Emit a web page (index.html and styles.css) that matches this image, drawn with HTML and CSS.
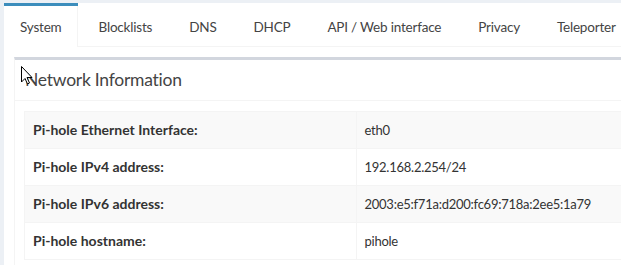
FILE: index.html
```html
<!DOCTYPE html>
<html>
<head>
<meta charset="utf-8">
<link rel="stylesheet" href="styles.css">
</head>
<body>
<div class="page">
  <div class="tabs-custom">
    <ul class="nav-tabs">
      <li class="active"><a>System</a></li>
      <li><a>Blocklists</a></li>
      <li><a>DNS</a></li>
      <li><a>DHCP</a></li>
      <li><a>API / Web interface</a></li>
      <li><a>Privacy</a></li>
      <li><a>Teleporter</a></li>
    </ul>
    <div class="tab-content">
      <div class="box">
        <div class="box-header"><h3>Network Information</h3></div>
        <div class="box-body">
          <table class="info">
            <tr class="odd"><th>Pi-hole Ethernet Interface:</th><td>eth0</td></tr>
            <tr><th>Pi-hole IPv4 address:</th><td>192.168.2.254/24</td></tr>
            <tr class="odd"><th>Pi-hole IPv6 address:</th><td>2003:e5:f71a:d200:fc69:718a:2ee5:1a79</td></tr>
            <tr><th>Pi-hole hostname:</th><td>pihole</td></tr>
          </table>
        </div>
      </div>
    </div>
  </div>
</div>
<svg class="cursor" width="12" height="19" viewBox="0 0 12 19"><path d="M0.5 0.5 L0.5 16 L4 12.5 L6.5 18 L8.5 17 L6 11.5 L11 11.5 Z" fill="#fff" stroke="#000" stroke-width="1" stroke-linejoin="miter"/></svg>
</body>
</html>
```
FILE: styles.css
```css
html, body {
  margin: 0;
  padding: 0;
  background: #ecf0f5;
  overflow: hidden;
  width: 621px;
  height: 265px;
}
body {
  font-family: Lato, "Liberation Sans", sans-serif;
  font-size: 13px;
  letter-spacing: -0.25px;
  color: #333;
  position: relative;
}
.page {
  padding: 3px 0 0 4px;
  width: 720px;
}
.tabs-custom {
  background: #fff;
  width: 704px;
}
.nav-tabs {
  list-style: none;
  margin: 0;
  padding: 0;
  display: flex;
  border-bottom: 1px solid #f4f4f4;
}
.nav-tabs li {
  margin-right: 5px;
  border-top: 3px solid transparent;
}
.nav-tabs li a {
  display: block;
  padding: 11px 15px 9px;
  line-height: 20px;
  font-size: 13.5px;
  letter-spacing: -0.2px;
  color: #444;
  border-left: 1px solid transparent;
  border-right: 1px solid transparent;
}
.nav-tabs li.active {
  border-top-color: #3c8dbc;
  margin-bottom: -1px;
  background: #fff;
}
.nav-tabs li.active a {
  color: #444;
  padding-bottom: 10px;
  border-right-color: #f4f4f4;
}
.tab-content {
  padding: 10px;
}
.box {
  border-top: 3px solid #d2d6de;
  border-left: 1px solid #f4f4f4;
  background: #fff;
}
.box-header {
  padding: 10px;
  border-bottom: 1px solid #f4f4f4;
}
.box-header h3 {
  margin: 0;
  font-size: 17.5px;
  font-weight: normal;
  line-height: 20px;
  color: #444;
}
.box-body {
  padding: 10px 10px 10px 9px;
}
.info {
  width: 100%;
  border-collapse: collapse;
  border: 1px solid #f4f4f4;
}
.info th, .info td {
  padding: 8px;
  line-height: 20px;
  border: 1px solid #f4f4f4;
  text-align: left;
  width: 50%;
}
.info th {
  font-weight: bold;
  font-size: 14px;
  letter-spacing: 0;
}
.info tr.odd {
  background: #f9f9f9;
}
.cursor {
  position: absolute;
  left: 21px;
  top: 66px;
}
```
